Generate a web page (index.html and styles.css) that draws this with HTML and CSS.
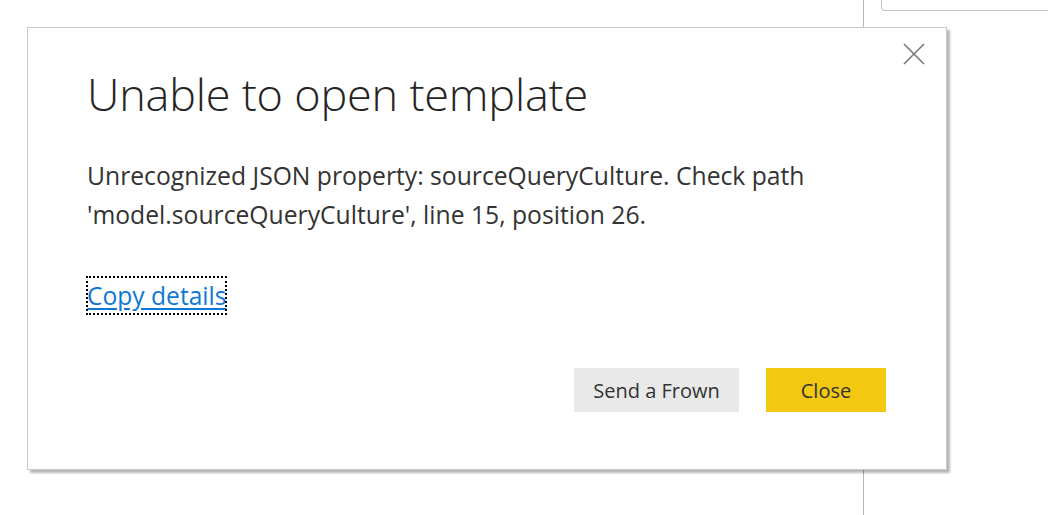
FILE: index.html
```html
<!DOCTYPE html>
<html>
<head>
<meta charset="utf-8">
<link rel="stylesheet" href="styles.css">
</head>
<body>
<div class="page">
  <div class="left-pane"></div>
  <div class="right-pane">
    <div class="top-box"></div>
  </div>
</div>
<div class="dialog">
  <button class="close-x" aria-label="Close">
    <svg width="22" height="22" viewBox="0 0 22 22"><path d="M1 1 L21 21 M21 1 L1 21" stroke="#777" stroke-width="1.6" fill="none"/></svg>
  </button>
  <h1 class="title">Unable to open template</h1>
  <p class="message">Unrecognized JSON property: sourceQueryCulture. Check path<br>'model.sourceQueryCulture', line 15, position 26.</p>
  <div class="link-row"><a class="copy-link" href="#">Copy details</a></div>
  <div class="actions">
    <button class="btn btn-secondary">Send a Frown</button>
    <button class="btn btn-primary">Close</button>
  </div>
</div>
</body>
</html>
```
FILE: styles.css
```css
html, body {
  margin: 0;
  padding: 0;
  background: #ffffff;
  width: 1048px;
  height: 515px;
  overflow: hidden;
  font-family: "Open Sans", "Noto Sans", sans-serif;
}
.page {
  display: flex;
  height: 515px;
}
.left-pane {
  width: 863px;
  border-right: 1px solid #b4b4b4;
}
.right-pane {
  flex: 1;
  padding-left: 17px;
}
.top-box {
  height: 20px;
  margin-top: -11px;
  border: 1px solid #c4c4c4;
  border-right: none;
  border-radius: 0 0 0 4px;
}
.dialog {
  position: absolute;
  left: 27px;
  top: 27px;
  width: 918px;
  height: 441px;
  background: #ffffff;
  border: 1px solid #c8c8c8;
  box-shadow: 3px 3px 2px rgba(0, 0, 0, 0.28);
  box-sizing: content-box;
  padding: 0;
}
.close-x {
  position: absolute;
  right: 21px;
  top: 15px;
  width: 22px;
  height: 22px;
  padding: 0;
  border: none;
  background: transparent;
}
.close-x svg { display: block; }
.title {
  margin: 38px 0 0 59px;
  font-weight: 300;
  font-size: 45px;
  line-height: 56px;
  color: #252423;
  letter-spacing: -0.2px;
}
.message {
  margin: 34px 0 0 59px;
  font-size: 24.7px;
  line-height: 39px;
  color: #333333;
}
.link-row {
  margin: 43px 0 0 59px;
  height: 37px;
}
.copy-link {
  display: inline-block;
  font-size: 24.6px;
  line-height: 37px;
  color: #0f78d4;
  text-decoration: underline;
  text-underline-offset: 3px;
  outline: 2px dotted #000;
  outline-offset: -1px;
}
.actions {
  display: flex;
  justify-content: flex-end;
  gap: 27px;
  margin: 54px 60px 0 0;
}
.btn {
  height: 44px;
  border: none;
  font-family: "Open Sans", "Noto Sans", sans-serif;
  font-size: 20px;
  color: #333333;
  padding: 0;
}
.btn-secondary {
  width: 165px;
  background: #e9e9e9;
}
.btn-primary {
  width: 120px;
  background: #f2c811;
}
```
